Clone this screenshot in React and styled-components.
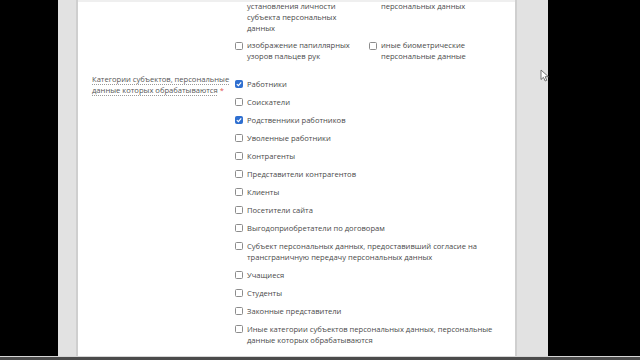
import React from "react";
import styled, { createGlobalStyle } from "styled-components";

const Global = createGlobalStyle`
  html, body {
    margin: 0;
    padding: 0;
    background: #000;
  }
  body {
    width: 640px;
    height: 360px;
    overflow: hidden;
    font-family: "Open Sans", "Noto Sans", sans-serif;
  }
`;

const Screen = styled.div`
  position: relative;
  width: 640px;
  height: 360px;
  display: flex;
  flex-direction: column;
  background: #000;
  overflow: hidden;
`;

const Viewport = styled.div`
  flex: 1;
  min-height: 0;
  display: flex;
`;

const Blackout = styled.div`
  width: ${p => p.$w}px;
  flex-shrink: 0;
  background: #000;
`;

const Gutter = styled.div`
  width: ${p => p.$w}px;
  flex-shrink: 0;
  background: #e2e2e2;
  box-shadow: inset ${p => (p.$side === "left" ? "-2px" : "2px")} 0 0 #cfcfcf;
`;

const Card = styled.main`
  flex: 1;
  min-width: 0;
  background: #fff;
  overflow: hidden;
  padding-left: 14px;
  box-shadow: inset 0 2px 0 #efefef;
`;

const Taskbar = styled.div`
  height: 3px;
  flex-shrink: 0;
  background: #4b4b4b;
  border-top: 1px solid #d6d6d6;
`;

const Form = styled.div`
  margin-top: -10px;
  display: flex;
  flex-direction: column;
  gap: 12px;
`;

const Field = styled.section`
  display: grid;
  grid-template-columns: 143px 1fr;
`;

const Label = styled.div`
  font-size: 7.6px;
  line-height: 11px;
  color: #555;
  padding-right: 4px;
`;

const LabelText = styled.span`
  text-decoration: underline dotted #9a9a9a;
  text-underline-offset: 2px;
`;

const Required = styled.span`
  color: #e0584f;
  margin-left: 2px;
`;

const OptionGrid = styled.div`
  display: grid;
  grid-template-columns: 134px 134px;
  row-gap: 6px;
`;

const OptionList = styled.div`
  display: flex;
  flex-direction: column;
  gap: 7px;
  padding-top: 4.5px;
`;

const Option = styled.label`
  display: flex;
  align-items: flex-start;
  gap: 4px;
  font-size: 7.6px;
  line-height: 11px;
  color: #4a4a4a;
  width: ${p => p.$w}px;
`;

const Box = styled.span`
  flex-shrink: 0;
  box-sizing: border-box;
  width: 8px;
  height: 8px;
  margin-top: 1.5px;
  border: 1px solid ${p => (p.$checked ? "#2f6fd0" : "#8c8c8c")};
  border-radius: 1.5px;
  background: ${p => (p.$checked ? "#2f6fd0" : "#fff")};
  display: flex;
  align-items: center;
  justify-content: center;
`;

const Cursor = styled.svg`
  position: absolute;
  left: 540px;
  top: 69px;
`;

const Checkbox = ({ checked }) => (
  <Box $checked={checked}>
    {checked && (
      <svg width="6" height="6" viewBox="0 0 6 6">
        <path d="M0.8 3.1 L2.4 4.6 L5.2 1.3" fill="none" stroke="#fff" strokeWidth="1.2" />
      </svg>
    )}
  </Box>
);

// top of the biometrics block is scrolled out of view
const biometrics = [
  { text: <>изображение лица для<br />установления личности субъекта персональных данных</> },
  { text: <>иные данные<br />персональных данных</> },
  { text: "изображение папиллярных узоров пальцев рук" },
  { text: "иные биометрические персональные данные" },
];

const subjects = [
  { text: "Работники", checked: true },
  { text: "Соискатели" },
  { text: "Родственники работников", checked: true },
  { text: "Уволенные работники" },
  { text: "Контрагенты" },
  { text: "Представители контрагентов" },
  { text: "Клиенты" },
  { text: "Посетители сайта" },
  { text: "Выгодоприобретатели по договорам" },
  { text: "Субъект персональных данных, предоставивший согласие на трансграничную передачу персональных данных" },
  { text: "Учащиеся" },
  { text: "Студенты" },
  { text: "Законные представители" },
  { text: "Иные категории субъектов персональных данных, персональные данные которых обрабатываются" },
];

export default function App() {
  return (
    <>
      <Global />
      <Screen>
        <Viewport>
          <Blackout $w={58} />
          <Gutter $w={20} $side="left" />
          <Card>
            <Form>
              <Field>
                <Label />
                <OptionGrid>
                  {biometrics.map((o, i) => (
                    <Option key={i} $w={122}>
                      <Checkbox checked={o.checked} />
                      <span>{o.text}</span>
                    </Option>
                  ))}
                </OptionGrid>
              </Field>
              <Field>
                <Label>
                  <LabelText>Категории субъектов, персональные данные которых обрабатываются</LabelText>
                  <Required>*</Required>
                </Label>
                <OptionList>
                  {subjects.map((o, i) => (
                    <Option key={i} $w={267}>
                      <Checkbox checked={o.checked} />
                      <span>{o.text}</span>
                    </Option>
                  ))}
                </OptionList>
              </Field>
            </Form>
          </Card>
          <Gutter $w={33} $side="right" />
          <Blackout $w={92} />
        </Viewport>
        <Taskbar />
        <Cursor width="10" height="13" viewBox="0 0 10 13">
          <path d="M1 1 L1 10.5 L3.4 8.3 L5.2 12 L6.8 11.3 L5.1 7.7 L8.4 7.7 Z" fill="#fff" stroke="#666" strokeWidth="0.9" strokeLinejoin="round" />
        </Cursor>
      </Screen>
    </>
  );
}
